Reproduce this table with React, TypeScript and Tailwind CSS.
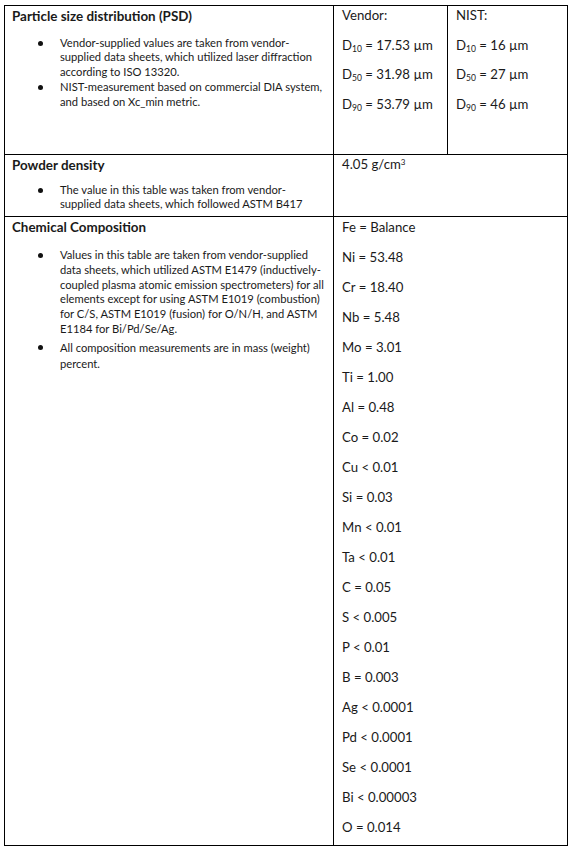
const Dot = () => (
  <span className="w-[48px] shrink-0 pl-[26px] pt-[5px]">
    <span className="block h-[5px] w-[5px] rounded-full bg-[#111]" />
  </span>
);

const Bullet = ({ lines, className = "" }: { lines: string[]; className?: string }) => (
  <li className={`flex ${className}`}>
    <Dot />
    <span className="whitespace-nowrap">
      {lines.map((l, i) => (
        <span key={i} className="block">
          {l}
        </span>
      ))}
    </span>
  </li>
);

const Sub = ({ children }: { children: string }) => (
  <span className="relative top-[2px] text-[8.5px] leading-none">{children}</span>
);

const elements = [
  "Fe = Balance",
  "Ni = 53.48",
  "Cr = 18.40",
  "Nb = 5.48",
  "Mo = 3.01",
  "Ti = 1.00",
  "Al = 0.48",
  "Co = 0.02",
  "Cu < 0.01",
  "Si = 0.03",
  "Mn < 0.01",
  "Ta < 0.01",
  "C = 0.05",
  "S < 0.005",
  "P < 0.01",
  "B = 0.003",
  "Ag < 0.0001",
  "Pd < 0.0001",
  "Se < 0.0001",
  "Bi < 0.00003",
  "O = 0.014",
];

const Line = ({ children }: { children: React.ReactNode }) => (
  <div className="h-[18px] whitespace-nowrap">{children}</div>
);

export default function App() {
  return (
    <div className="min-h-[850px] w-[572px] bg-white pt-[5px] font-['Lato',sans-serif] text-[#1a1a1a]">
      <div className="ml-[4px] grid w-[564px] grid-cols-[329px_114px_120px] grid-rows-[149px_62px_629px] border-l border-t border-black">
        {/* PSD */}
        <div className="border-b border-r border-black px-[7px]">
          <h2 className="pt-[1px] text-[13.4px] font-bold leading-[18px]">Particle size distribution (PSD)</h2>
          <ul className="mt-[11px] text-[11.2px] leading-[14.4px]">
            <Bullet
              lines={[
                "Vendor-supplied values are taken from vendor-",
                "supplied data sheets, which utilized laser diffraction",
                "according to ISO 13320.",
              ]}
            />
            <Bullet
              className="mt-[1px]"
              lines={["NIST-measurement based on commercial DIA system,", "and based on Xc_min metric."]}
            />
          </ul>
        </div>
        <div className="flex flex-col gap-[11.7px] border-b border-r border-black px-[8px] text-[13.2px] leading-[18px]">
          <Line>Vendor:</Line>
          <Line>
            D<Sub>10</Sub> = 17.53 µm
          </Line>
          <Line>
            D<Sub>50</Sub> = 31.98 µm
          </Line>
          <Line>
            D<Sub>90</Sub> = 53.79 µm
          </Line>
        </div>
        <div className="flex flex-col gap-[11.7px] border-b border-r border-black px-[8px] text-[13.2px] leading-[18px]">
          <Line>NIST:</Line>
          <Line>
            D<Sub>10</Sub> = 16 µm
          </Line>
          <Line>
            D<Sub>50</Sub> = 27 µm
          </Line>
          <Line>
            D<Sub>90</Sub> = 46 µm
          </Line>
        </div>

        {/* Powder density */}
        <div className="border-b border-r border-black px-[7px]">
          <h2 className="pt-[1px] text-[13.4px] font-bold leading-[18px]">Powder density</h2>
          <ul className="mt-[9px] text-[11.2px] leading-[14.4px]">
            <Bullet
              lines={["The value in this table was taken from vendor-", "supplied data sheets, which followed ASTM B417"]}
            />
          </ul>
        </div>
        <div className="col-span-2 border-b border-r border-black px-[8px] text-[13.2px] leading-[18px]">
          <Line>
            4.05 g/cm<sup className="text-[8px]">3</sup>
          </Line>
        </div>

        {/* Chemical composition */}
        <div className="border-b border-r border-black px-[7px]">
          <h2 className="pt-[1px] text-[13.4px] font-bold leading-[18px]">Chemical Composition</h2>
          <ul className="mt-[12px] text-[11.2px] leading-[14.8px]">
            <Bullet
              lines={[
                "Values in this table are taken from vendor-supplied",
                "data sheets, which utilized ASTM E1479 (inductively-",
                "coupled plasma atomic emission spectrometers) for all",
                "elements except for using ASTM E1019 (combustion)",
                "for C/S, ASTM E1019 (fusion) for O/N/H, and ASTM",
                "E1184 for Bi/Pd/Se/Ag.",
              ]}
            />
            <Bullet
              className="mt-[3px] leading-[16px]"
              lines={["All composition measurements are in mass (weight)", "percent."]}
            />
          </ul>
        </div>
        <div className="col-span-2 flex flex-col gap-[12px] border-b border-r border-black px-[8px] pt-[1px] text-[13.2px] leading-[18px]">
          {elements.map((e) => (
            <Line key={e}>{e}</Line>
          ))}
        </div>
      </div>
    </div>
  );
}
